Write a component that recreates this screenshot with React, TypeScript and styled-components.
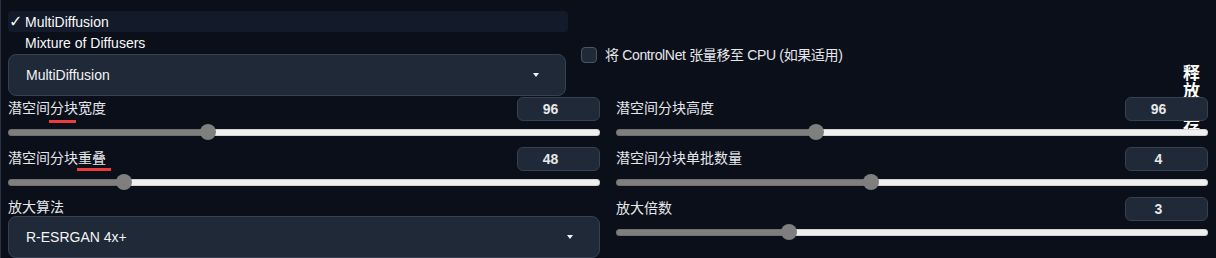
import React from "react";
import styled, { createGlobalStyle } from "styled-components";

const Global = createGlobalStyle`
  html, body { margin: 0; padding: 0; background: #0b0f19; }
  body {
    font-family: "Liberation Sans", "Noto Sans CJK SC", sans-serif;
    color: #e5e7eb;
    overflow: hidden;
  }
  * { box-sizing: border-box; }
`;

const Page = styled.div`
  height: 258px;
  border-left: 1px solid #2a3242;
  padding: 0 8px 0 7px;
  overflow: hidden;
`;

const TopRow = styled.div`
  display: flex;
  align-items: flex-start;
  height: 96px;
`;

const DropdownBlock = styled.div`
  position: relative;
  width: 558px;
  flex-shrink: 0;
  padding-top: 54px;
`;

const Menu = styled.ul`
  position: absolute;
  left: 0;
  top: 11px;
  width: 560px;
  margin: 0;
  padding: 0;
  list-style: none;
`;

const MenuItem = styled.li<{ $selected?: boolean }>`
  display: flex;
  align-items: center;
  height: 21px;
  border-radius: 4px;
  background: ${(p) => (p.$selected ? "#131a29" : "transparent")};
  font-size: 14px;
  color: #f9fafb;
`;

const Check = styled.span<{ $visible: boolean }>`
  width: 17px;
  padding-left: 1px;
  font-family: "DejaVu Sans", sans-serif;
  font-size: 16px;
  line-height: 21px;
  visibility: ${(p) => (p.$visible ? "visible" : "hidden")};
`;

const Select = styled.div`
  height: 42px;
  border: 1px solid #374151;
  border-radius: 8px;
  background: #1f2937;
  display: flex;
  align-items: center;
  justify-content: space-between;
  padding: 0 26px 0 17px;
  font-size: 14px;
  color: #f3f4f6;
`;

const Caret = styled.span`
  width: 0;
  height: 0;
  border-left: 3.5px solid transparent;
  border-right: 3.5px solid transparent;
  border-top: 4px solid #f3f4f6;
`;

const CheckArea = styled.div`
  flex: 1;
  display: flex;
  align-items: flex-start;
  margin-left: 15px;
  padding-top: 47px;
`;

const CheckBox = styled.span`
  width: 16px;
  height: 16px;
  flex-shrink: 0;
  border: 1px solid #4b5563;
  border-radius: 4px;
  background: #1f2937;
`;

const CheckLabel = styled.span`
  flex: 1;
  margin-left: 8px;
  font-size: 14px;
  line-height: 16px;
  letter-spacing: -0.35px;
  color: #e5e7eb;
`;

const SideButton = styled.div`
  position: relative;
  z-index: 0;
  width: 17px;
  height: 67px;
  margin-top: 16px;
  margin-right: 8px;
  overflow: hidden;
  font-family: "Noto Sans CJK SC", sans-serif;
  font-size: 17px;
  line-height: 18px;
  font-weight: 700;
  color: #ffffff;
  word-break: break-all;
`;

const Grid = styled.div`
  position: relative;
  z-index: 1;
  display: grid;
  grid-template-columns: 1fr 1fr;
  column-gap: 16px;
  margin-top: 1px;
`;

const Field = styled.div`
  position: relative;
  display: flex;
  flex-direction: column;
  padding-bottom: 7px;
`;

const FieldHead = styled.div`
  display: flex;
  justify-content: space-between;
  align-items: flex-start;
  height: 24px;
`;

const Label = styled.span<{ $tight?: boolean }>`
  font-family: "Noto Sans CJK SC", sans-serif;
  font-size: 14px;
  line-height: ${(p) => (p.$tight ? "19px" : "20px")};
  color: #e5e7eb;
`;

const NumberBox = styled.input`
  width: 83px;
  height: 24px;
  border: 1px solid #374151;
  border-radius: 6px;
  background: #1f2937;
  color: #e5e7eb;
  font-family: "Liberation Sans", sans-serif;
  font-size: 14px;
  font-weight: 700;
  text-align: center;
  padding: 0 16px 0 0;
  outline: none;
`;

const Range = styled.input`
  -webkit-appearance: none;
  appearance: none;
  width: 100%;
  height: 16px;
  margin: 3px 0 0;
  background: transparent;
  &::-webkit-slider-runnable-track {
    height: 7px;
    border-radius: 4px;
    background: linear-gradient(
      to right,
      #7f7f7f calc(8px + (100% - 16px) * var(--p)),
      #efefef calc(8px + (100% - 16px) * var(--p))
    );
    box-shadow: inset 0 0 0 1px rgba(0, 0, 0, 0.12);
  }
  &::-webkit-slider-thumb {
    -webkit-appearance: none;
    width: 16px;
    height: 16px;
    margin-top: -4.5px;
    border: none;
    border-radius: 50%;
    background: #7f7f7f;
  }
`;

const Mark = styled.span<{ $left: number; $top: number; $width: number }>`
  position: absolute;
  left: ${(p) => p.$left}px;
  top: ${(p) => p.$top}px;
  width: ${(p) => p.$width}px;
  height: 3px;
  background: #ef3b3b;
`;

type SliderProps = {
  label: string;
  value: number;
  min: number;
  max: number;
  mark?: { left: number; top: number; width: number };
};

function SliderField({ label, value, min, max, mark }: SliderProps) {
  const p = (value - min) / (max - min);
  return (
    <Field>
      <FieldHead>
        <Label>{label}</Label>
        <NumberBox type="text" defaultValue={String(value)} />
      </FieldHead>
      <Range
        type="range"
        min={min}
        max={max}
        defaultValue={value}
        style={{ ["--p" as any]: p } as React.CSSProperties}
      />
      {mark && <Mark $left={mark.left} $top={mark.top} $width={mark.width} />}
    </Field>
  );
}

export default function App() {
  return (
    <>
      <Global />
      <Page>
        <TopRow>
          <DropdownBlock>
            <Menu>
              <MenuItem $selected>
                <Check $visible>✓</Check>
                MultiDiffusion
              </MenuItem>
              <MenuItem>
                <Check $visible={false}>✓</Check>
                Mixture of Diffusers
              </MenuItem>
            </Menu>
            <Select>
              <span>MultiDiffusion</span>
              <Caret />
            </Select>
          </DropdownBlock>
          <CheckArea>
            <CheckBox />
            <CheckLabel>将 ControlNet 张量移至 CPU (如果适用)</CheckLabel>
            <SideButton>释放显存</SideButton>
          </CheckArea>
        </TopRow>
        <Grid>
          <SliderField
            label="潜空间分块宽度"
            value={96}
            min={16}
            max={256}
            mark={{ left: 41, top: 23, width: 27 }}
          />
          <SliderField label="潜空间分块高度" value={96} min={16} max={256} />
          <SliderField
            label="潜空间分块重叠"
            value={48}
            min={0}
            max={256}
            mark={{ left: 69, top: 21, width: 34 }}
          />
          <SliderField label="潜空间分块单批数量" value={4} min={1} max={8} />
          <Field>
            <Label $tight>放大算法</Label>
            <Select>
              <span>R-ESRGAN 4x+</span>
              <Caret />
            </Select>
          </Field>
          <SliderField label="放大倍数" value={3} min={1} max={8} />
        </Grid>
      </Page>
    </>
  );
}
